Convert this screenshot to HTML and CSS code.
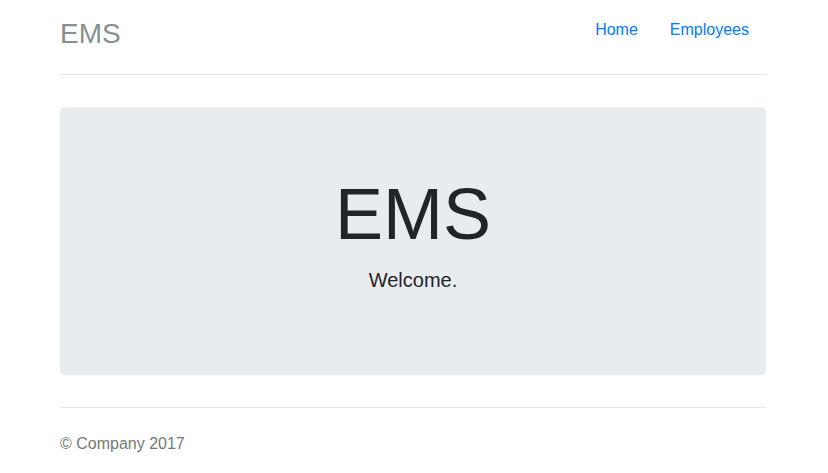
FILE: index.html
```html
<!DOCTYPE html>
<html lang="en">
<head>
<meta charset="utf-8">
<title>EMS</title>
<link rel="stylesheet" href="styles.css">
</head>
<body>
<div class="container">
  <header class="header">
    <h3 class="brand">EMS</h3>
    <nav class="nav">
      <a class="nav-link" href="#">Home</a>
      <a class="nav-link" href="#">Employees</a>
    </nav>
  </header>
  <main class="jumbotron">
    <h1 class="display">EMS</h1>
    <p class="lead">Welcome.</p>
  </main>
  <footer class="footer">
    <p class="copy">© Company 2017</p>
  </footer>
</div>
</body>
</html>
```

FILE: styles.css
```css
* { box-sizing: border-box; }
html, body {
  margin: 0;
  padding: 0;
  background: #fff;
}
body {
  font-family: "Liberation Sans", Arial, sans-serif;
  font-size: 16px;
  line-height: 1.5;
  color: #212529;
  padding-top: 10px;
}
.container {
  width: 706px;
  margin: 0 auto 0 60px;
}
.header {
  display: flex;
  justify-content: space-between;
  align-items: flex-start;
  padding-bottom: 16px;
  border-bottom: 1px solid #e5e5e5;
  margin-bottom: 32px;
}
.brand {
  margin: 0;
  font-size: 28px;
  font-weight: 400;
  line-height: 48px;
  color: #868e96;
}
.nav {
  display: flex;
  margin-top: 0;
}
.nav-link {
  display: block;
  padding: 8px 16px;
  color: #007bff;
  text-decoration: none;
  line-height: 24px;
}
.nav-link:last-child { padding-right: 17px; }
.jumbotron {
  background: #e9ecef;
  border-radius: 5px;
  padding: 64px 32px 64px;
  text-align: center;
  margin-bottom: 32px;
}
.display {
  margin: 0 0 8px;
  font-size: 72px;
  font-weight: 400;
  line-height: 1.2;
  color: #212529;
}
.lead {
  margin: 0 0 16px;
  font-size: 20px;
  line-height: 30px;
  color: #212529;
}
.footer {
  border-top: 1px solid #e5e5e5;
  padding-top: 24px;
  color: #777;
}
.copy {
  margin: 0 0 16px;
}
```
